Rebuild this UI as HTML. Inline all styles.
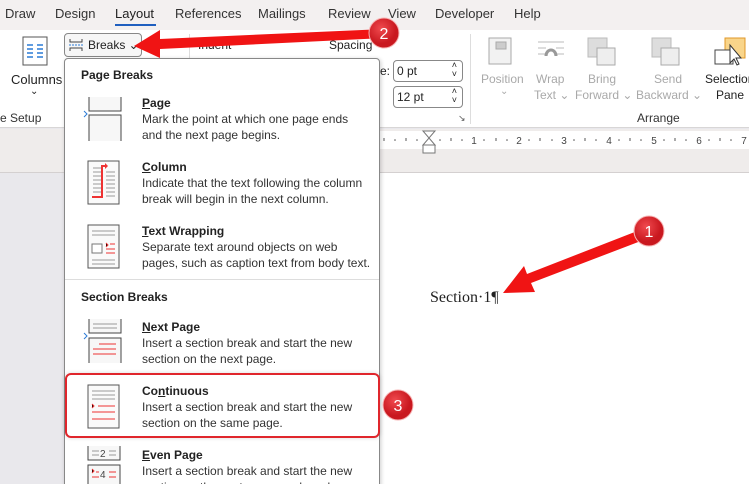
<!DOCTYPE html>
<html><head><meta charset="utf-8"><style>
*{margin:0;padding:0;box-sizing:border-box}
html,body{width:749px;height:484px;overflow:hidden}
body{position:relative;font-family:"Liberation Sans",sans-serif;background:#e9e8ec;color:#222}
.a{position:absolute}
.tab{position:absolute;top:6px;font-size:13px;color:#333}
.g{color:#a9a9a9}
.mi{position:absolute;left:77px;font-size:12px;line-height:16px;color:#333;white-space:nowrap}
.mi b{display:block;color:#222;font-size:12px}
.mi b u{text-decoration:underline}
.ic{position:absolute;left:22px;width:34px}
.hd{position:absolute;left:16px;font-weight:bold;font-size:12px;color:#222}
.r{position:absolute;top:134px;font-size:9px;color:#444}
</style></head><body>
<div class="a" style="left:0;top:0;width:749px;height:30px;background:#f3f0f0"></div>
<div class="tab" style="left:5px">Draw</div>
<div class="tab" style="left:55px">Design</div>
<div class="tab" style="left:115px;color:#222">Layout</div>
<div class="a" style="left:115px;top:24px;width:41px;height:2px;background:#1f5fbf"></div>
<div class="tab" style="left:175px">References</div>
<div class="tab" style="left:258px">Mailings</div>
<div class="tab" style="left:328px">Review</div>
<div class="tab" style="left:388px">View</div>
<div class="tab" style="left:435px">Developer</div>
<div class="tab" style="left:514px">Help</div>
<div class="a" style="left:0;top:30px;width:749px;height:98px;background:#fff;border-bottom:1px solid #d8d6d6"></div>
<svg class="a" style="left:22px;top:36px" width="26" height="30"><rect x="1" y="1" width="24" height="28" fill="#fff" stroke="#555"/><g stroke="#2b7bd6" stroke-width="1.5"><path d="M5 9h6M15 9h6M5 13h6M15 13h6M5 17h6M15 17h6M5 21h6M15 21h6"/></g></svg>
<div class="a" style="left:11px;top:72px;font-size:13px">Columns</div>
<div class="a" style="left:30px;top:86px;font-size:10px">⌄</div>
<div class="a" style="left:0;top:111px;font-size:12px;color:#333">e Setup</div>
<div class="a" style="left:64px;top:33px;width:78px;height:24px;border:1px solid #888;border-radius:4px;background:#f6f6f6"></div>
<svg class="a" style="left:68px;top:38px" width="16" height="14"><path d="M2 1v3h12V1M2 13v-3h12v3" stroke="#444" fill="none"/><path d="M1 7h14" stroke="#2b7bd6" stroke-dasharray="2 1"/></svg>
<div class="a" style="left:88px;top:38px;font-size:12px">Breaks ⌄</div>
<div class="a" style="left:189px;top:34px;width:1px;height:90px;background:#ddd"></div>
<div class="a" style="left:198px;top:38px;font-size:12px">Indent</div>
<div class="a" style="left:329px;top:38px;font-size:12px">Spacing</div>
<div class="a" style="left:380px;top:64px;font-size:12px">e:</div>
<div class="a" style="left:393px;top:60px;width:70px;height:22px;border:1px solid #888;border-radius:4px;font-size:12px;padding:3px 3px">0 pt<span style="position:absolute;right:5px;top:0;font-size:9px;line-height:9px">˄<br>˅</span></div>
<div class="a" style="left:393px;top:86px;width:70px;height:22px;border:1px solid #888;border-radius:4px;font-size:12px;padding:3px 3px">12 pt<span style="position:absolute;right:5px;top:0;font-size:9px;line-height:9px">˄<br>˅</span></div>
<div class="a" style="left:458px;top:113px;font-size:9px;color:#555">↘</div>
<div class="a" style="left:470px;top:34px;width:1px;height:90px;background:#ddd"></div>
<svg class="a" style="left:488px;top:37px" width="26" height="30"><rect x="1" y="1" width="22" height="26" fill="#f2f2f2" stroke="#aaa"/><rect x="8" y="5" width="10" height="7" fill="#ccc" stroke="#aaa"/></svg>
<div class="a g" style="left:481px;top:72px;font-size:12px">Position</div>
<div class="a g" style="left:500px;top:86px;font-size:10px">⌄</div>
<svg class="a" style="left:536px;top:40px" width="30" height="20"><path d="M2 2h26M2 8h8M20 8h8M2 14h8M20 14h8" stroke="#bbb"/><path d="M10 16a5 6 0 0 1 10 0" stroke="#999" stroke-width="3" fill="none"/></svg>
<div class="a g" style="left:536px;top:72px;font-size:12px">Wrap</div>
<div class="a g" style="left:534px;top:88px;font-size:12px">Text ⌄</div>
<svg class="a" style="left:587px;top:37px" width="30" height="30"><rect x="1" y="1" width="19" height="19" fill="#ddd" stroke="#bbb"/><rect x="10" y="11" width="18" height="17" fill="#eee" stroke="#aaa"/></svg>
<div class="a g" style="left:588px;top:72px;font-size:12px">Bring</div>
<div class="a g" style="left:575px;top:88px;font-size:12px">Forward ⌄</div>
<svg class="a" style="left:651px;top:37px" width="30" height="30"><rect x="1" y="1" width="19" height="19" fill="#ddd" stroke="#bbb"/><rect x="10" y="11" width="18" height="17" fill="#eee" stroke="#aaa"/></svg>
<div class="a g" style="left:654px;top:72px;font-size:12px">Send</div>
<div class="a g" style="left:636px;top:88px;font-size:12px">Backward ⌄</div>
<div class="a" style="left:637px;top:111px;font-size:12px;color:#333">Arrange</div>
<svg class="a" style="left:713px;top:37px" width="36" height="32"><rect x="12" y="1" width="20" height="20" fill="#f9d58a" stroke="#e0982a"/><rect x="2" y="13" width="18" height="14" fill="#fff" stroke="#444"/><path d="M17 8v18l4-4 3 6 2-1-3-6h5z" fill="#fff" stroke="#333"/></svg>
<div class="a" style="left:705px;top:72px;font-size:12px">Selection</div>
<div class="a" style="left:716px;top:88px;font-size:12px">Pane</div>
<div class="a" style="left:0;top:129px;width:749px;height:44px;background:#efeceb;border-bottom:1px solid #d4d0d0"></div>
<div class="a" style="left:380px;top:131px;width:369px;height:18px;background:#fff"></div>
<svg class="a" style="left:380px;top:131px" width="369" height="18">
<g stroke="#555"><path d="M4 7v3M26 7v3M71 7v3M116 7v3M160 7v3M205 7v3M250 7v3M295 7v3M340 7v3"/></g>
<g fill="#555"><circle cx="15" cy="9" r=".8"/><circle cx="37" cy="9" r=".8"/><circle cx="60" cy="9" r=".8"/><circle cx="82" cy="9" r=".8"/><circle cx="104" cy="9" r=".8"/><circle cx="127" cy="9" r=".8"/><circle cx="149" cy="9" r=".8"/><circle cx="172" cy="9" r=".8"/><circle cx="194" cy="9" r=".8"/><circle cx="216" cy="9" r=".8"/><circle cx="239" cy="9" r=".8"/><circle cx="261" cy="9" r=".8"/><circle cx="284" cy="9" r=".8"/><circle cx="306" cy="9" r=".8"/><circle cx="329" cy="9" r=".8"/><circle cx="351" cy="9" r=".8"/></g>
<g font-size="10" fill="#444" font-family="Liberation Sans" text-anchor="middle"><text x="94" y="13">1</text><text x="139" y="13">2</text><text x="184" y="13">3</text><text x="229" y="13">4</text><text x="274" y="13">5</text><text x="319" y="13">6</text><text x="364" y="13">7</text></g></svg>
<svg class="a" style="left:422px;top:130px" width="14" height="24"><path d="M1 1h12L7 8 1 1zM7 8l6 7H1z M1 15h12v8H1z" fill="#fff" stroke="#777"/></svg>
<div class="a" style="left:380px;top:173px;width:369px;height:311px;background:#fff"></div>
<div class="a" style="left:430px;top:289px;font-family:'Liberation Serif',serif;font-size:16px;color:#222">Section·1¶</div>
<div class="a" style="left:64px;top:58px;width:316px;height:440px;background:#fff;border:1px solid #888;border-radius:4px;box-shadow:1px 1px 4px rgba(0,0,0,.2)">
<div class="hd" style="top:9px">Page Breaks</div>
<svg class="a" style="left:14px;top:38px" width="44" height="44"><path d="M10 0v14h32V0M10 44V18h32v26" fill="#f7f7f7" stroke="#444"/><path d="M5 14l3 3-3 3" stroke="#2b7bd6" fill="none"/></svg>
<div class="mi" style="top:36px"><b><u>P</u>age</b>Mark the point at which one page ends<br>and the next page begins.</div>
<svg class="ic" style="top:101px" width="34" height="46"><rect x="1" y="1" width="31" height="43" fill="#fafafa" stroke="#555"/><g stroke="#999"><path d="M6 8h8M6 12h8M6 16h8M6 20h8M6 24h8M6 28h8M6 32h8M19 12h9M19 16h9M19 20h9M19 24h9M19 28h9M19 32h9M19 36h9"/></g><path d="M5 37h10V6h4" stroke="#e33" stroke-width="2" fill="none"/><path d="M18 3l3 3-3 3z" fill="#e33"/></svg>
<div class="mi" style="top:100px"><b><u>C</u>olumn</b>Indicate that the text following the column<br>break will begin in the next column.</div>
<svg class="ic" style="top:165px" width="34" height="46"><rect x="1" y="1" width="31" height="43" fill="#fafafa" stroke="#555"/><g stroke="#999"><path d="M5 7h23M5 11h23M5 36h23M5 40h23"/></g><rect x="5" y="20" width="10" height="9" fill="#fff" stroke="#777"/><g stroke="#e33"><path d="M19 19l2 2-2 2M23 20h5M19 25h9M19 29h9"/></g></svg>
<div class="mi" style="top:164px"><b><u>T</u>ext Wrapping</b>Separate text around objects on web<br>pages, such as caption text from body text.</div>
<div class="a" style="left:0;top:220px;width:314px;height:1px;background:#ddd"></div>
<div class="hd" style="top:231px">Section Breaks</div>
<svg class="a" style="left:14px;top:260px" width="44" height="44"><path d="M10 0v14h32V0" fill="#f7f7f7" stroke="#444"/><path d="M14 5h24M14 9h24" stroke="#999"/><path d="M10 44V19h32v25" fill="#f7f7f7" stroke="#444"/><path d="M20 25h17M14 30h23M14 35h23" stroke="#e33"/><path d="M5 14l3 3-3 3" stroke="#2b7bd6" fill="none"/></svg>
<div class="mi" style="top:260px"><b><u>N</u>ext Page</b>Insert a section break and start the new<br>section on the next page.</div>
<svg class="ic" style="top:325px" width="34" height="46"><rect x="1" y="1" width="31" height="43" fill="#fafafa" stroke="#555"/><g stroke="#999"><path d="M5 7h23M5 11h23M5 15h23"/></g><g stroke="#e33"><path d="M5 20l2 2-2 2M11 22h17M5 28h23M5 35h23"/></g></svg>
<div class="mi" style="top:324px"><b>Co<u>n</u>tinuous</b>Insert a section break and start the new<br>section on the same page.</div>
<div class="a" style="left:0;top:314px;width:315px;height:65px;border:2px solid #e0262c;border-radius:6px;box-shadow:0 0 4px rgba(0,0,0,.15)"></div>
<svg class="ic" style="top:387px" width="36" height="44"><path d="M1 0v14h32V0" fill="#f7f7f7" stroke="#444"/><path d="M5 5h7M5 9h7M22 5h7M22 9h7" stroke="#999"/><text x="13" y="11" font-size="10" fill="#444" font-family="Liberation Sans">2</text><path d="M1 44V19h32v25" fill="#f7f7f7" stroke="#444"/><path d="M5 23l2 2-2 2M5 31h7M22 26h7M22 31h7M9 26h3" stroke="#e33"/><text x="13" y="32" font-size="10" fill="#444" font-family="Liberation Sans">4</text></svg>
<div class="mi" style="top:388px"><b><u>E</u>ven Page</b>Insert a section break and start the new<br>section on the next even-numbered page.</div>
</div>
<svg class="a" style="left:0;top:0" width="749" height="484">
<defs><radialGradient id="c" cx="40%" cy="35%"><stop offset="0" stop-color="#f04a4f"/><stop offset="1" stop-color="#c9181f"/></radialGradient></defs>
<path d="M384 29L160 39L160 30L134 46L160 58L160 49L384 38Z" fill="#f01414"/>
<path d="M650 226L527 274L524 266L503 293L535 292L531 283L654 236Z" fill="#f01414"/>
<circle cx="384" cy="33" r="15" fill="url(#c)" stroke="#f7b3b3"/><text x="384" y="39" text-anchor="middle" font-size="16" fill="#fff" font-family="Liberation Sans">2</text>
<circle cx="649" cy="231" r="15" fill="url(#c)" stroke="#f7b3b3"/><text x="649" y="237" text-anchor="middle" font-size="16" fill="#fff" font-family="Liberation Sans">1</text>
<circle cx="398" cy="405" r="15" fill="url(#c)" stroke="#f7b3b3"/><text x="398" y="411" text-anchor="middle" font-size="16" fill="#fff" font-family="Liberation Sans">3</text>
</svg>
</body></html>
